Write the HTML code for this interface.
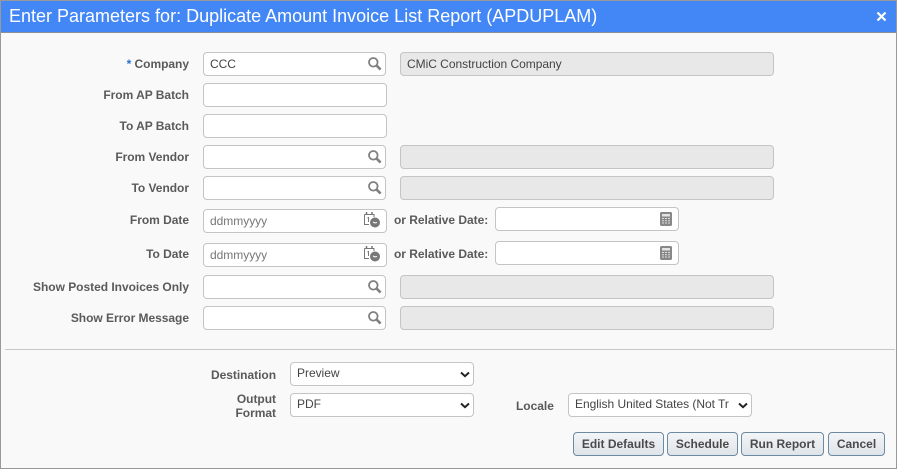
<!DOCTYPE html>
<html><head><meta charset="utf-8"><style>
html,body{margin:0;padding:0}
body{width:897px;height:469px;overflow:hidden;position:relative;background:#f9f9f9;font-family:"Liberation Sans",sans-serif}
#frame{position:absolute;left:0;top:0;width:895px;height:467px;border:1px solid #999}
#title{position:absolute;left:1px;top:1px;width:895px;height:31px;background:#4287f5;border-bottom:1px solid #8a8f96;box-sizing:content-box;color:#fff;font-size:18px;line-height:31px;text-indent:8px;white-space:nowrap}
.l{position:absolute;right:708px;font-size:12px;font-weight:bold;color:#5a5a5a;line-height:14px;white-space:nowrap;letter-spacing:-.03px}
.i{position:absolute;box-sizing:border-box;background:#fff;border:1px solid #c4c4c4;border-radius:4px;height:24px;font-size:12px;color:#444;line-height:22px;padding-left:6px;letter-spacing:-.03px}
.r{left:400px;width:374px;background:#e8e8e8}
.w{left:203px;width:183px}
.d{color:#777}
.t{position:absolute;left:394px;font-size:12px;font-weight:bold;color:#5a5a5a;line-height:14px;letter-spacing:-.03px}
svg{position:absolute}
.b{position:absolute;top:432px;height:24px;box-sizing:border-box;border:1px solid #6d8aa3;border-radius:4px;background:linear-gradient(#f3f5f7,#dfe4e9);color:#4a4a4a;font-size:12px;font-weight:bold;text-align:center;line-height:22px}
</style></head><body>
<div id="frame"></div>
<div id="title">Enter Parameters for: Duplicate Amount Invoice List Report (APDUPLAM)</div>
<svg style="left:876px;top:11px" width="11" height="11" viewBox="0 0 11 11"><path d="M1.5 1.5L9.5 9.5M9.5 1.5L1.5 9.5" stroke="#fff" stroke-width="2.2"/></svg>

<div class="l" style="top:57px"><span style="color:#2a6fd0">*</span> Company</div>
<div class="l" style="top:88px">From AP Batch</div>
<div class="l" style="top:119px">To AP Batch</div>
<div class="l" style="top:150px">From Vendor</div>
<div class="l" style="top:181px">To Vendor</div>
<div class="l" style="top:213px">From Date</div>
<div class="l" style="top:247px">To Date</div>
<div class="l" style="top:280px">Show Posted Invoices Only</div>
<div class="l" style="top:311px">Show Error Message</div>

<div class="i w" style="top:52px">CCC</div>
<div class="i r" style="top:52px">CMiC Construction Company</div>
<div class="i" style="left:203px;width:184px;top:83px"></div>
<div class="i" style="left:203px;width:184px;top:114px"></div>
<div class="i w" style="top:145px"></div><div class="i r" style="top:145px"></div>
<div class="i w" style="top:176px"></div><div class="i r" style="top:176px"></div>
<div class="i w d" style="top:209px;width:184px">ddmmyyyy</div>
<div class="i w d" style="top:243px;width:184px">ddmmyyyy</div>
<div class="i w" style="top:275px"></div><div class="i r" style="top:275px"></div>
<div class="i w" style="top:306px"></div><div class="i r" style="top:306px"></div>

<svg style="left:367px;top:56px" width="16" height="16" viewBox="0 0 16 16"><circle cx="6.3" cy="6.3" r="4.3" fill="none" stroke="#808080" stroke-width="1.8"/><path d="M9.6 9.6L13.6 13.6" stroke="#808080" stroke-width="2.6"/></svg>
<svg style="left:367px;top:149px" width="16" height="16" viewBox="0 0 16 16"><circle cx="6.3" cy="6.3" r="4.3" fill="none" stroke="#808080" stroke-width="1.8"/><path d="M9.6 9.6L13.6 13.6" stroke="#808080" stroke-width="2.6"/></svg>
<svg style="left:367px;top:180px" width="16" height="16" viewBox="0 0 16 16"><circle cx="6.3" cy="6.3" r="4.3" fill="none" stroke="#808080" stroke-width="1.8"/><path d="M9.6 9.6L13.6 13.6" stroke="#808080" stroke-width="2.6"/></svg>
<svg style="left:367px;top:279px" width="16" height="16" viewBox="0 0 16 16"><circle cx="6.3" cy="6.3" r="4.3" fill="none" stroke="#808080" stroke-width="1.8"/><path d="M9.6 9.6L13.6 13.6" stroke="#808080" stroke-width="2.6"/></svg>
<svg style="left:367px;top:310px" width="16" height="16" viewBox="0 0 16 16"><circle cx="6.3" cy="6.3" r="4.3" fill="none" stroke="#808080" stroke-width="1.8"/><path d="M9.6 9.6L13.6 13.6" stroke="#808080" stroke-width="2.6"/></svg>

<svg style="left:363px;top:211px" width="18" height="18" viewBox="0 0 18 18"><path d="M1.5 3.5H11V6M1.5 3.5V13.5H6" fill="none" stroke="#777" stroke-width="1"/><path d="M3.5 1V4M9 1V4" stroke="#777" stroke-width="1.5"/><path d="M4.5 7L5.5 6.5V11" fill="none" stroke="#777"/><circle cx="12" cy="11.5" r="5" fill="#777"/><path d="M10 11L12 12L14 11.5" fill="none" stroke="#fff"/></svg>
<svg style="left:363px;top:245px" width="18" height="18" viewBox="0 0 18 18"><path d="M1.5 3.5H11V6M1.5 3.5V13.5H6" fill="none" stroke="#777" stroke-width="1"/><path d="M3.5 1V4M9 1V4" stroke="#777" stroke-width="1.5"/><path d="M4.5 7L5.5 6.5V11" fill="none" stroke="#777"/><circle cx="12" cy="11.5" r="5" fill="#777"/><path d="M10 11L12 12L14 11.5" fill="none" stroke="#fff"/></svg>

<div class="t" style="top:213px">or Relative Date:</div>
<div class="t" style="top:247px">or Relative Date:</div>
<div class="i" style="left:495px;width:184px;top:207px"></div>
<div class="i" style="left:495px;width:184px;top:241px"></div>
<svg style="left:660px;top:212px" width="12" height="14" viewBox="0 0 12 14"><rect x="0" y="0" width="12" height="14" rx="1.5" fill="#888"/><rect x="2" y="2" width="8" height="2.5" fill="#e4e4e4"/><path d="M2 6.5H10M2 8.8H10M2 11H10" stroke="#ddd" stroke-width="1" stroke-dasharray="2 1"/></svg>
<svg style="left:660px;top:246px" width="12" height="14" viewBox="0 0 12 14"><rect x="0" y="0" width="12" height="14" rx="1.5" fill="#888"/><rect x="2" y="2" width="8" height="2.5" fill="#e4e4e4"/><path d="M2 6.5H10M2 8.8H10M2 11H10" stroke="#ddd" stroke-width="1" stroke-dasharray="2 1"/></svg>

<div style="position:absolute;left:5px;top:349px;width:890px;height:1px;background:#c8c8c8"></div>

<div class="l" style="top:368px;right:621px">Destination</div>
<div class="l" style="top:392px;right:621px;text-align:right">Output<br>Format</div>
<div class="l" style="top:399px;left:516px;right:auto">Locale</div>

<div class="i" style="left:290px;width:184px;top:362px;line-height:21px">Preview</div>
<div class="i" style="left:290px;width:184px;top:393px;line-height:21px">PDF</div>
<div class="i" style="left:568px;width:184px;top:393px;line-height:21px;overflow:hidden;white-space:nowrap"><span style="display:inline-block;width:154px;overflow:hidden;vertical-align:top">English United States (Not Translated)</span></div>
<svg style="left:460px;top:371px" width="10" height="7" viewBox="0 0 10 7"><path d="M1 1.5L5 5.2L9 1.5" fill="none" stroke="#222" stroke-width="2"/></svg>
<svg style="left:460px;top:402px" width="10" height="7" viewBox="0 0 10 7"><path d="M1 1.5L5 5.2L9 1.5" fill="none" stroke="#222" stroke-width="2"/></svg>
<svg style="left:738px;top:402px" width="10" height="7" viewBox="0 0 10 7"><path d="M1 1.5L5 5.2L9 1.5" fill="none" stroke="#222" stroke-width="2"/></svg>

<div class="b" style="left:573px;width:91px">Edit Defaults</div>
<div class="b" style="left:667px;width:71px">Schedule</div>
<div class="b" style="left:741px;width:83px">Run Report</div>
<div class="b" style="left:828px;width:57px">Cancel</div>
</body></html>
